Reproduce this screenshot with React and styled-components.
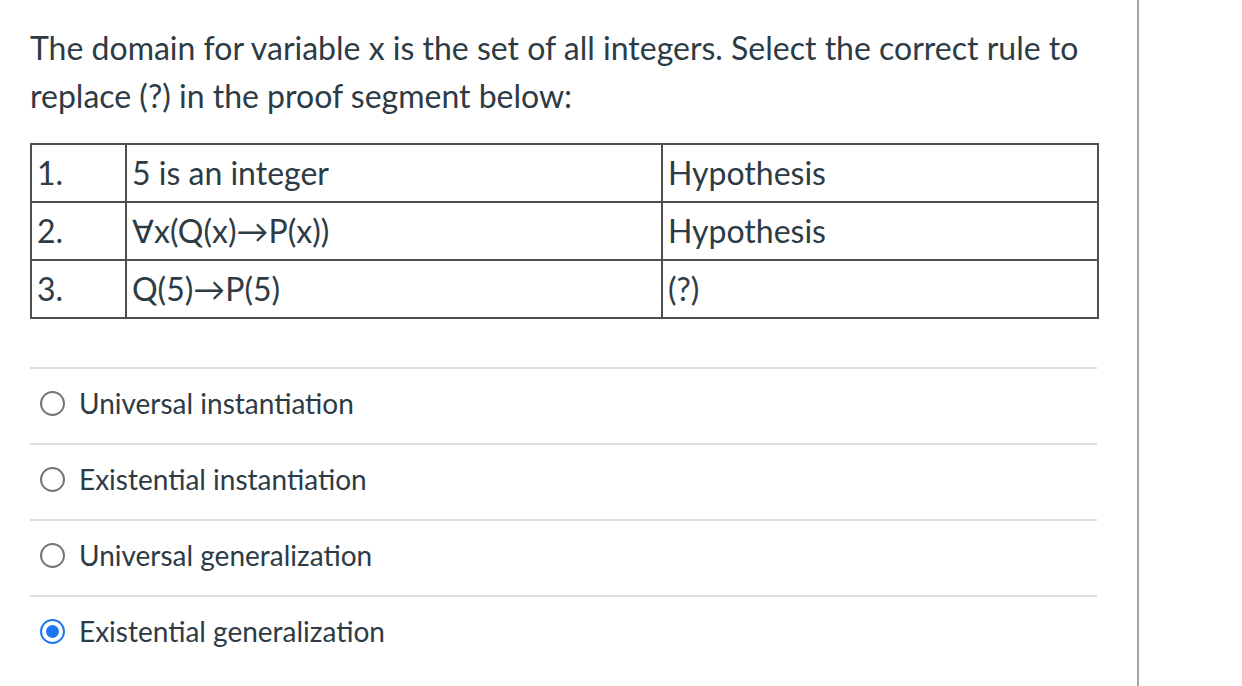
import React from "react";
import styled, { createGlobalStyle } from "styled-components";

const Global = createGlobalStyle`
  html, body { margin: 0; padding: 0; background: #fff; }
  body { font-family: Lato, "Noto Sans", sans-serif; color: #2d3b45; }
`;

const Page = styled.div`
  display: flex;
  height: 686px;
  overflow: hidden;
`;

const Main = styled.div`
  width: 1067px;
  padding: 24px 0 0 30px;
  flex: none;
`;

const Divider = styled.div`
  width: 2px;
  background: #a5a5a5;
  margin-left: 40px;
  flex: none;
`;

const Question = styled.p`
  margin: 0;
  font-size: 32px;
  line-height: 48px;
`;

const Table = styled.table`
  margin-top: 23px;
  width: 1067px;
  table-layout: fixed;
  border-collapse: collapse;
  border: 2px solid #4f4f4f;
`;

const Col = styled.col`
  width: ${(p) => p.$w};
`;

const Cell = styled.td`
  border: 2px solid #4f4f4f;
  height: 56px;
  padding: 0 5px;
  font-size: 32px;
  vertical-align: middle;
  line-height: 1;
  white-space: nowrap;
`;

const Options = styled.div`
  margin-top: 48px;
`;

const Option = styled.label`
  display: flex;
  align-items: center;
  gap: 14px;
  height: 74px;
  box-sizing: content-box;
  padding: 0 0 0 10px;
  border-top: 2px solid #dcdcdc;
  font-size: 28px;
  & > * { margin-top: -6px; }
`;

const Label = styled.span``;

const Radio = styled.span`
  width: 25px;
  height: 25px;
  box-sizing: border-box;
  border-radius: 50%;
  border: 2px solid ${(p) => (p.$on ? "#1f77f0" : "#777")};
  display: flex;
  align-items: center;
  justify-content: center;
  flex: none;
  &::after {
    content: "";
    width: 13px;
    height: 13px;
    border-radius: 50%;
    background: ${(p) => (p.$on ? "#1f77f0" : "transparent")};
  }
`;

const rows = [
  ["1.", "5 is an integer", "Hypothesis"],
  ["2.", "∀x(Q(x)→P(x))", "Hypothesis"],
  ["3.", "Q(5)→P(5)", "(?)"],
];

const options = [
  ["Universal instantiation", false],
  ["Existential instantiation", false],
  ["Universal generalization", false],
  ["Existential generalization", true],
];

export default function App() {
  return (
    <Page>
      <Global />
      <Main>
        <Question>
          The domain for variable x is the set of all integers. Select the correct rule to replace (?) in the proof segment below:
        </Question>
        <Table>
          <colgroup>
            <Col $w="95px" />
            <Col $w="536px" />
            <Col $w="436px" />
          </colgroup>
          <tbody>
            {rows.map(([n, s, r]) => (
              <tr key={n}>
                <Cell>{n}</Cell>
                <Cell>{s}</Cell>
                <Cell>{r}</Cell>
              </tr>
            ))}
          </tbody>
        </Table>
        <Options>
          {options.map(([t, on]) => (
            <Option key={t}>
              <Radio $on={on} />
              <Label>{t}</Label>
            </Option>
          ))}
        </Options>
      </Main>
      <Divider />
    </Page>
  );
}
